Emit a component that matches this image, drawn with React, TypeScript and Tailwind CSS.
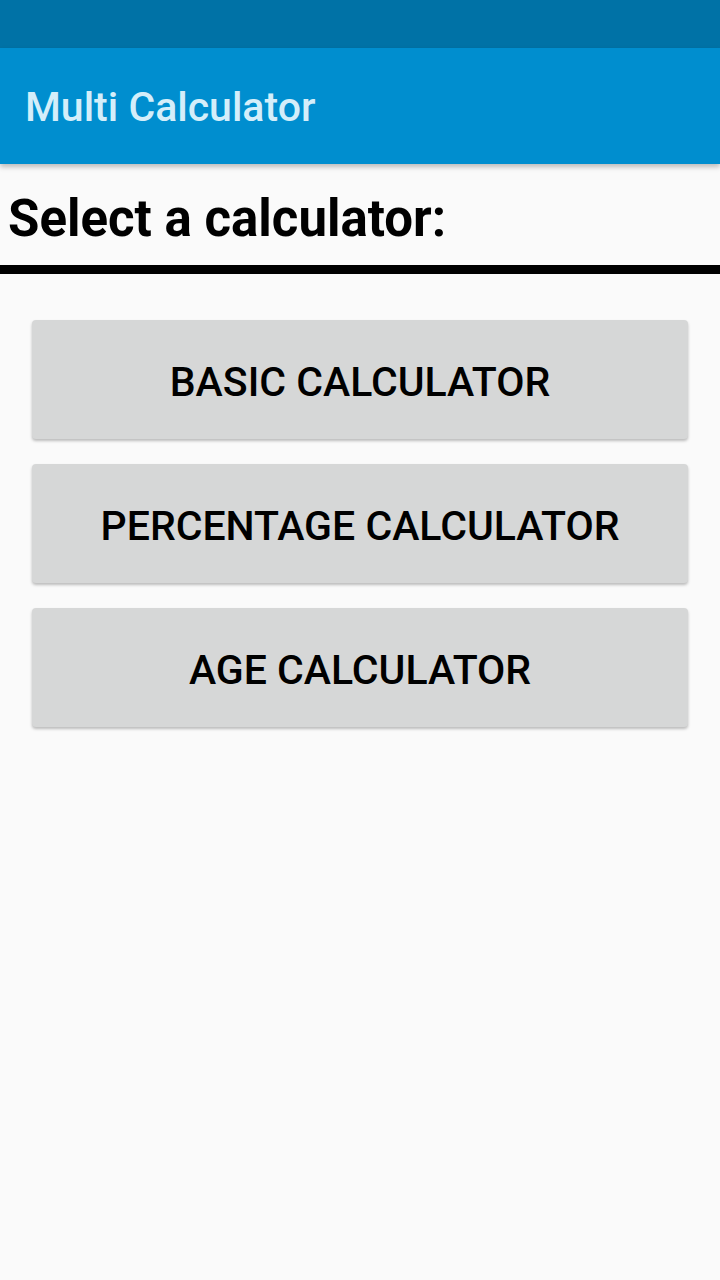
const calculators = ['Basic Calculator', 'Percentage Calculator', 'Age Calculator']

export default function App() {
  return (
    <div className="flex flex-col w-[720px] h-[1280px] bg-[#fafafa] font-['Roboto',sans-serif]">
      {/* Status bar */}
      <div className="h-[48px] bg-[#0072a6]" />

      {/* Toolbar */}
      <div className="flex items-center h-[116px] px-[25px] pt-[4px] bg-[#008ecf] shadow-[0_3px_5px_rgba(0,0,0,0.25)] z-10">
        <h1 className="text-[41px] text-[#d4eefa] font-medium">Multi Calculator</h1>
      </div>

      {/* Heading */}
      <div className="pt-[24px] pl-[8px] pb-[15px]">
        <h2 className="text-[51px] leading-[62px] font-bold text-black">Select a calculator:</h2>
      </div>
      <div className="h-[9px] bg-black" />

      {/* Calculator buttons */}
      <div className="flex flex-col gap-[25px] px-[32px] pt-[46px]">
        {calculators.map(name => (
          <button
            key={ name }
            className="h-[119px] pt-[6px] rounded-[4px] bg-[#d6d7d7] shadow-[0_2px_3px_rgba(0,0,0,0.25)] text-[41px] font-medium uppercase text-black"
          >
            { name }
          </button>
        ))}
      </div>
    </div>
  )
}
